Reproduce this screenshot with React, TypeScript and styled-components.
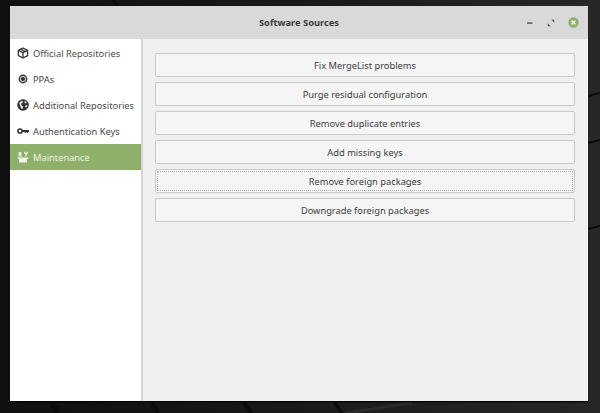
import React from "react";
import styled, { createGlobalStyle } from "styled-components";

const GlobalStyle = createGlobalStyle`
  html, body {
    margin: 0;
    padding: 0;
    height: 100%;
    overflow: hidden;
    background: #1b1b1b;
  }
`;

const Desktop = styled.div`
  position: relative;
  width: 600px;
  height: 413px;
  box-sizing: border-box;
  padding: 6px 12px 12px 10px;
  display: flex;
  background: linear-gradient(90deg, #101010 0, #141414 30%, #1f1f1f 70%, #272727 100%);
  font-family: "Noto Sans", "Open Sans", sans-serif;
`;

const Wallpaper = styled.svg`
  position: absolute;
  left: 0;
  top: 0;
`;

const Window = styled.main`
  position: relative;
  flex: 1;
  display: flex;
  flex-direction: column;
  background: #f0f0f0;
  box-shadow: -1px 0 0 #fff inset, 0 1px 1px #000;
`;

const TitleBar = styled.header`
  height: 33px;
  flex: none;
  display: flex;
  align-items: center;
  justify-content: center;
  position: relative;
  background: #d9d9d9;
  font-size: 9.3px;
  font-weight: 700;
  color: #3a3a3a;
`;

const WindowControls = styled.div`
  position: absolute;
  right: 9px;
  top: 0;
  height: 100%;
  display: flex;
  align-items: center;
  gap: 13px;
`;

const ControlIcon = styled.svg`
  display: block;
`;

const Body = styled.div`
  flex: 1;
  display: flex;
  min-height: 0;
`;

const Sidebar = styled.nav`
  width: 131px;
  flex: none;
  box-sizing: content-box;
  padding-top: 1px;
  background: #fff;
  border-right: 2px solid #d6d6d6;
  display: flex;
  flex-direction: column;
`;

const SidebarRow = styled.div<{ $active?: boolean }>`
  height: 26px;
  display: flex;
  align-items: center;
  gap: 4px;
  padding-left: 7px;
  font-size: 9.3px;
  background: ${(p) => (p.$active ? "#8fb06b" : "transparent")};
  color: ${(p) => (p.$active ? "#eaf3df" : "#4a4a4a")};
`;

const IconBox = styled.span`
  width: 12px;
  height: 12px;
  flex: none;
  display: flex;
  align-items: center;
  justify-content: center;
`;

const Content = styled.section`
  flex: 1;
  display: flex;
  flex-direction: column;
  gap: 5px;
  padding: 14px 13px 0 12px;
`;

const ActionButton = styled.button<{ $focused?: boolean }>`
  height: 24px;
  padding: 0;
  flex: none;
  font-family: inherit;
  font-size: 9.3px;
  color: #3c3c3c;
  background: #f5f5f5;
  border: 1px solid #c9c9c9;
  border-radius: 2px;
  outline: ${(p) => (p.$focused ? "1px dotted #b5b5b5" : "none")};
  outline-offset: -3px;
`;

const PackageIcon = () => (
  <svg width="12" height="12" viewBox="0 0 12 12" fill="none" stroke="#333" strokeWidth="1.3" strokeLinejoin="round">
    <path d="M6 1 L10.6 3.3 V8.7 L6 11 L1.4 8.7 V3.3 Z" />
    <path d="M1.4 3.3 L6 5.6 L10.6 3.3 M6 5.6 V11 M3.7 2.1 L8.3 4.5" />
  </svg>
);

const PpaIcon = () => (
  <svg width="12" height="12" viewBox="0 0 12 12">
    <circle cx="6" cy="6" r="4.4" fill="#333" />
    <circle cx="6" cy="6" r="3" fill="#ddd" />
    <circle cx="6" cy="6" r="2.1" fill="#333" />
  </svg>
);

const GlobeIcon = () => (
  <svg width="12" height="12" viewBox="0 0 12 12">
    <circle cx="6" cy="6" r="5.8" fill="#333" />
    <path d="M2.2 4 L4.6 2 L6 2.6 L5.2 4.2 L3.6 4.6 L4.6 6.4 L6 7.4 L5.4 10 L4.2 9.6 L3.4 7 Z" fill="#fff" />
    <path d="M8 1.8 L9.8 3.6 L8.6 4.6 L7.4 3.2 Z M8.6 6.4 L10.4 6 L9.4 8.6 L8.2 8 Z" fill="#fff" />
  </svg>
);

const KeyIcon = () => (
  <svg width="12" height="12" viewBox="0 0 12 12">
    <circle cx="3" cy="6" r="2.1" fill="none" stroke="#333" strokeWidth="1.5" />
    <path d="M5 5.1 H12 V6.9 H11 V8 H9.7 V6.9 H8.8 V8 H7.6 V6.9 H5 Z" fill="#333" />
  </svg>
);

const ToolsIcon = () => (
  <svg width="12" height="12" viewBox="0 0 12 12" fill="#f1f6ea">
    <path d="M0.8 6.6 H11.2 V8 H10 V11.4 H2 V8 H0.8 Z" />
    <circle cx="3" cy="2.6" r="1.6" />
    <path d="M1 5.6 C1 4.6 2 4.3 3 4.3 C4 4.3 5 4.6 5 5.6 Z" />
    <path d="M7.2 0.8 V2.4 L8.4 3.1 V5.6 H9.6 V3.1 L10.8 2.4 V0.8 L9.8 0.8 V1.8 H8.2 V0.8 Z" />
  </svg>
);

const pages = [
  { label: "Official Repositories", icon: <PackageIcon /> },
  { label: "PPAs", icon: <PpaIcon /> },
  { label: "Additional Repositories", icon: <GlobeIcon /> },
  { label: "Authentication Keys", icon: <KeyIcon /> },
  { label: "Maintenance", icon: <ToolsIcon />, active: true },
];

const actions = [
  "Fix MergeList problems",
  "Purge residual configuration",
  "Remove duplicate entries",
  "Add missing keys",
  "Remove foreign packages",
  "Downgrade foreign packages",
];

export default function App() {
  return (
    <>
      <GlobalStyle />
      <Desktop>
        <Wallpaper width="600" height="413" viewBox="0 0 600 413" fill="none" stroke="#0b0b0b" strokeWidth="2">
          <path d="M113 0 L118 6" />
          <path d="M243 402 L252 413" strokeWidth="4" />
          <path d="M334 402 L342 413" strokeWidth="3" />
          <path d="M52 404 L58 413" strokeWidth="5" />
          <path d="M152 404 L158 413" strokeWidth="5" />
          <path d="M345 413 L412 403" stroke="#2a2a2a" strokeWidth="3" />
          <path d="M588 96 L600 93" />
          <path d="M588 143 L600 140" />
          <path d="M588 229 L600 226" />
        </Wallpaper>
        <Window>
          <TitleBar>
            Software Sources
            <WindowControls>
              <ControlIcon width="8" height="8" viewBox="0 0 8 8">
                <rect x="1" y="3.4" width="5.5" height="1.3" fill="#444" />
              </ControlIcon>
              <ControlIcon width="8" height="8" viewBox="0 0 8 8" fill="#444">
                <path d="M4.4 0.8 H7.2 V3.6 Z" />
                <path d="M0.8 4.4 V7.2 H3.6 Z" />
              </ControlIcon>
              <ControlIcon width="11" height="11" viewBox="0 0 11 11">
                <circle cx="5.5" cy="5.5" r="5.2" fill="#8fb06b" />
                <path d="M3.6 3.6 L7.4 7.4 M7.4 3.6 L3.6 7.4" stroke="#eef4e6" strokeWidth="1.6" />
              </ControlIcon>
            </WindowControls>
          </TitleBar>
          <Body>
            <Sidebar>
              {pages.map((page) => (
                <SidebarRow key={page.label} $active={page.active}>
                  <IconBox>{page.icon}</IconBox>
                  {page.label}
                </SidebarRow>
              ))}
            </Sidebar>
            <Content>
              {actions.map((action) => (
                <ActionButton key={action} $focused={action === "Remove foreign packages"}>
                  {action}
                </ActionButton>
              ))}
            </Content>
          </Body>
        </Window>
      </Desktop>
    </>
  );
}
